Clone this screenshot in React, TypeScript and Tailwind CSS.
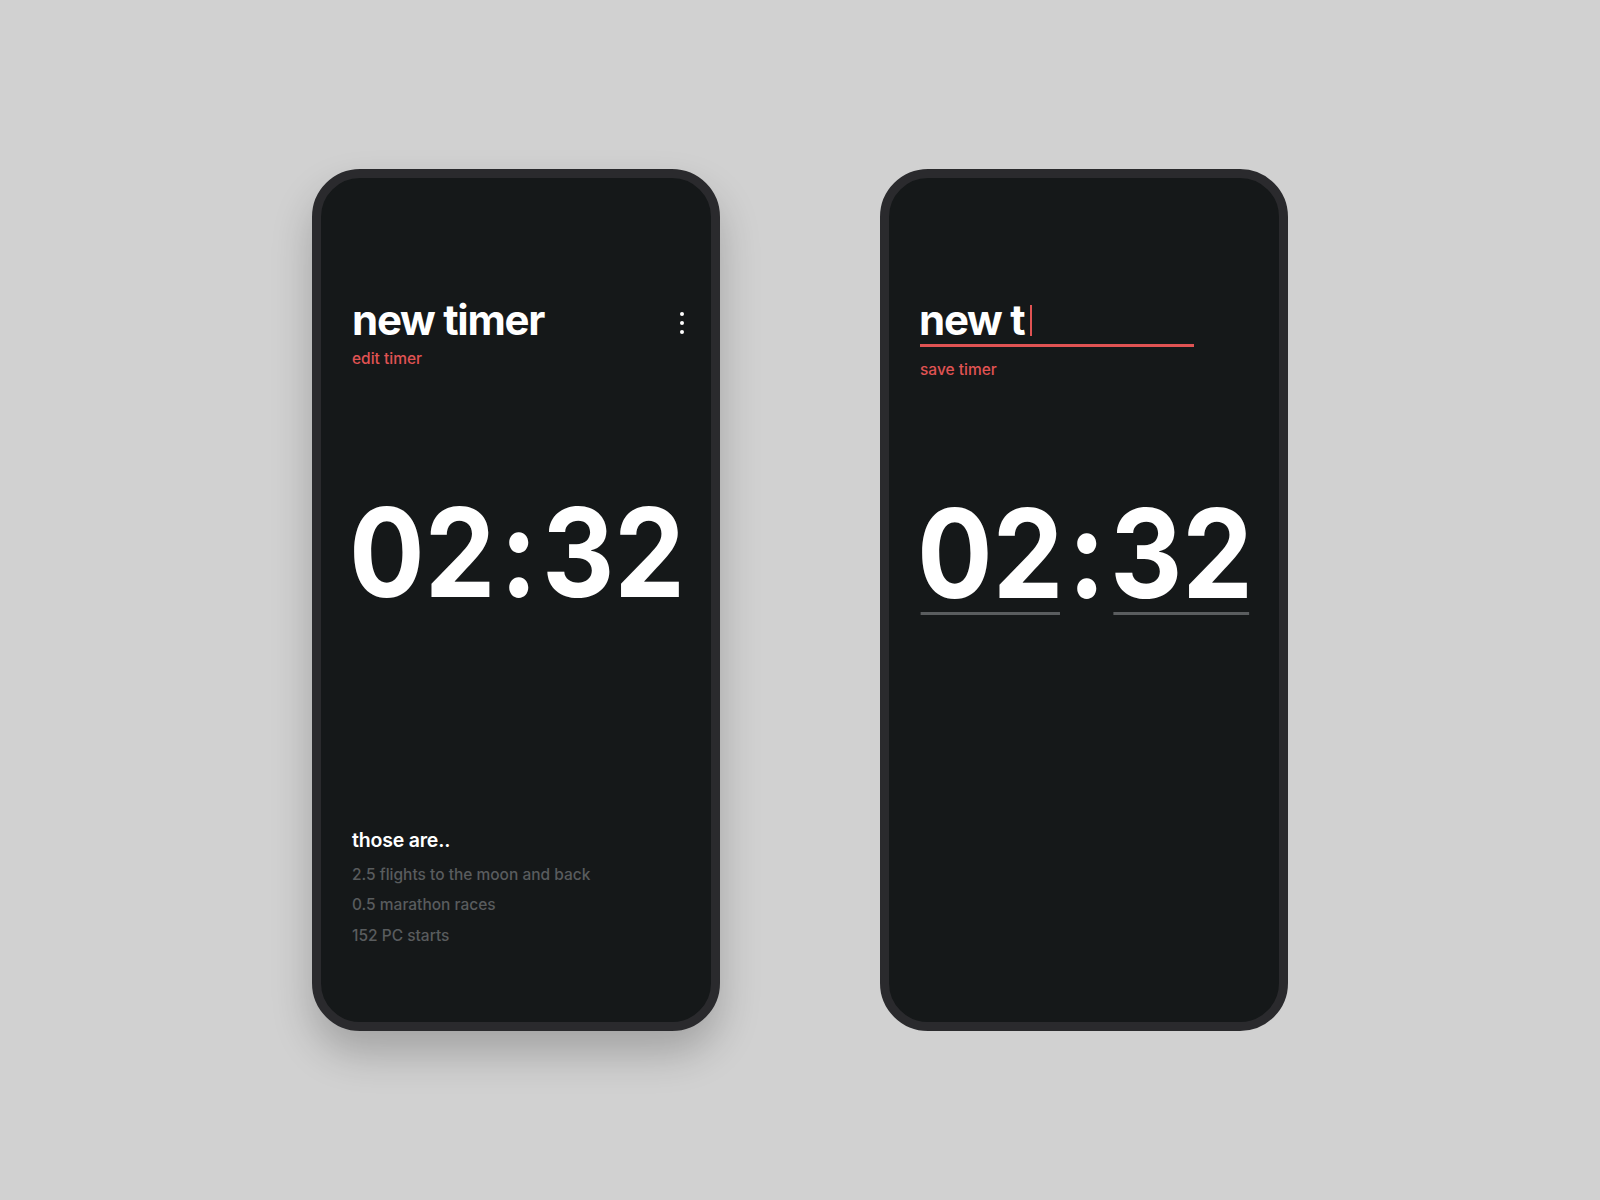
import { useState } from "react";

const FONT = "font-['Inter','Liberation_Sans',sans-serif]";

// Big clock digits. The reference face is narrower than Inter, so squeeze it a bit.
function Time({ underlined }: { underlined?: boolean }) {
  return (
    <div className="-ml-[3px] flex origin-left scale-x-[0.905] items-start text-[124px] font-bold leading-none text-white">
      <div className="flex flex-col">
        <span>02</span>
        {underlined && <div className="mx-[4px] -mt-[3px] h-[3px] bg-[#5a5d5f]" />}
      </div>
      <span className="mx-[5px]">:</span>
      <div className="flex flex-col">
        <span>32</span>
        {underlined && <div className="mx-[4px] -mt-[3px] h-[3px] bg-[#5a5d5f]" />}
      </div>
    </div>
  );
}

function Phone({
  children,
  shadow,
}: {
  children: React.ReactNode;
  shadow?: boolean;
}) {
  return (
    <div
      className={
        "h-[862px] w-[408px] rounded-[48px] border-[9px] border-[#2a2a2d] bg-[#151819] " +
        (shadow ? "shadow-[0_22px_40px_rgba(0,0,0,0.22)]" : "")
      }
    >
      {children}
    </div>
  );
}

// Left: timer view with the fun facts. Right: same timer while renaming.
export default function App() {
  const [name] = useState("new timer");
  const facts = [
    "2.5 flights to the moon and back",
    "0.5 marathon races",
    "152 PC starts",
  ];

  return (
    <main
      className={`flex min-h-[1200px] w-full items-center justify-center gap-[160px] bg-[#d1d1d1] ${FONT}`}
    >
      <Phone shadow>
        <div className="flex h-full flex-col px-[31px] pt-[118px] pb-[75px]">
          <div className="flex items-start justify-between">
            <div className="flex flex-col">
              <h1 className="text-[42px] font-bold leading-[48px] tracking-[-0.03em] text-white">
                {name}
              </h1>
              <button
                type="button"
                className="mt-[4px] self-start text-[15.5px] font-medium leading-[22px] text-[#e05353]"
              >
                edit timer
              </button>
            </div>
            <div className="mt-[16px] -mr-[4px] flex flex-col gap-[5px]">
              <span className="h-[4px] w-[4px] rounded-full bg-white" />
              <span className="h-[4px] w-[4px] rounded-full bg-white" />
              <span className="h-[4px] w-[4px] rounded-full bg-white" />
            </div>
          </div>

          <div className="mt-[120px]">
            <Time />
          </div>

          <div className="mt-auto flex flex-col">
            <h2 className="text-[19.5px] font-semibold tracking-[-0.01em] text-white">
              those are..
            </h2>
            <ul className="mt-[8px] flex flex-col gap-[8px] text-[15.5px] font-medium leading-[22.5px] text-[#595c5e]">
              {facts.map((f) => (
                <li key={f}>{f}</li>
              ))}
            </ul>
          </div>
        </div>
      </Phone>

      <Phone>
        <div className="flex h-full flex-col px-[31px] pt-[118px]">
          <div className="flex w-[274px] items-center border-b-[3px] border-[#e05353]">
            <span className="-ml-[1px] text-[42px] font-bold leading-[48px] tracking-[-0.03em] text-white">
              new t
            </span>
            <span className="ml-[6px] h-[31px] w-[2px] bg-[#e05353]" />
          </div>
          <button
            type="button"
            className="mt-[11px] self-start text-[15.5px] font-medium text-[#e05353]"
          >
            save timer
          </button>
          <div className="mt-[110px]">
            <Time underlined />
          </div>
        </div>
      </Phone>
    </main>
  );
}
